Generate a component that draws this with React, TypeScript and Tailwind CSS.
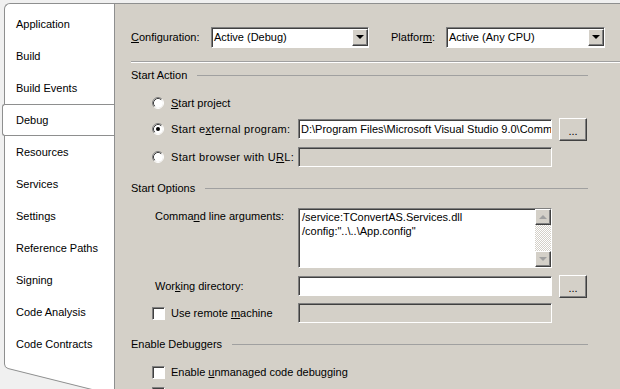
import React from "react";

const sunken =
  "border border-t-[#808080] border-l-[#808080] border-b-white border-r-white shadow-[inset_1px_1px_0_#404040]";
const raised =
  "border border-t-white border-l-white border-b-[#404040] border-r-[#404040] shadow-[inset_-1px_-1px_0_#808080] bg-[#d4d0c8]";

const tabs = [
  "Application",
  "Build",
  "Build Events",
  "Debug",
  "Resources",
  "Services",
  "Settings",
  "Reference Paths",
  "Signing",
  "Code Analysis",
  "Code Contracts",
];

function Combo({ value, className }: { value: string; className: string }) {
  return (
    <div className={`flex h-[21px] items-center bg-white ${sunken} ${className}`}>
      <span className="flex-1 truncate pl-[2px]">{value}</span>
      <div className={`flex h-[17px] w-[16px] items-center justify-center ${raised}`}>
        <div className="h-0 w-0 border-x-[4px] border-t-[4px] border-x-transparent border-t-black" />
      </div>
    </div>
  );
}

function Radio({ checked }: { checked?: boolean }) {
  return (
    <svg width="12" height="12" viewBox="0 0 12 12" className="shrink-0">
      <circle cx="6" cy="6" r="5" fill="white" />
      <path d="M2.11 9.89 A5.5 5.5 0 0 1 9.89 2.11" stroke="#808080" fill="none" />
      <path d="M9.89 2.11 A5.5 5.5 0 0 1 2.11 9.89" stroke="white" fill="none" />
      <path d="M2.82 9.18 A4.5 4.5 0 0 1 9.18 2.82" stroke="#404040" fill="none" />
      {checked && <circle cx="6" cy="6" r="2" fill="black" />}
    </svg>
  );
}

function Check() {
  return <div className={`h-[13px] w-[13px] shrink-0 bg-white ${sunken}`} />;
}

function Dots() {
  return (
    <div className={`ml-[7px] flex h-[23px] w-[28px] shrink-0 items-center justify-center pt-[3px] ${raised}`}>
      ...
    </div>
  );
}

function Header({ title }: { title: string }) {
  return (
    <div className="flex h-[14px] items-center gap-[10px] pr-[32px]">
      <span>{title}</span>
      <div className="h-px flex-1 bg-[#a0a0a0]" />
    </div>
  );
}

export default function App() {
  return (
    <div className="flex h-[389px] w-[620px] overflow-hidden bg-[#f0f0f0] font-['Liberation_Sans',Arial,sans-serif] text-[11px] leading-[14px] text-black">
      {/* Tab strip */}
      <div className="flex w-[114px] shrink-0 flex-col *:shrink-0">
        <div className="ml-[4px] mt-[3px] rounded-tl-[6px] border-l border-t border-[#8e8f8f] bg-white pt-[4px]">
          {tabs.map((t) =>
            t === "Debug" ? (
              <div
                key={t}
                className="-ml-[3px] flex h-[32px] items-center rounded-l-[3px] border-y border-l border-[#8e8f8f] bg-white pl-[13px]"
              >
                {t}
              </div>
            ) : (
              <div key={t} className="flex h-[32px] items-center pl-[11px]">
                {t}
              </div>
            )
          )}
        </div>
        <svg width="114" height="29" viewBox="0 0 114 29">
          <path d="M4 0 L4 4 Q4 7.5 8 8.5 L114 35 L114 0 Z" fill="white" />
          <path d="M4.5 0 L4.5 4 Q4.5 7.5 8 8.5 L114 35" stroke="#8e8f8f" fill="none" />
        </svg>
      </div>

      {/* Property page */}
      <div className="mt-[3px] flex min-w-0 flex-1 flex-col overflow-hidden border-l border-t border-[#8e8f8f] bg-[#d4d0c8] pl-[16px] *:shrink-0">
        <div className="mt-[22px] flex h-[22px] items-center">
          <span className="w-[80px]">
            <u>C</u>onfiguration:
          </span>
          <Combo value="Active (Debug)" className="w-[158px]" />
          <span className="ml-[22px] w-[55px]">
            Platfor<u>m</u>:
          </span>
          <Combo value="Active (Any CPU)" className="w-[159px]" />
        </div>

        <div className="mt-[13px] h-[2px] border-t border-b border-t-[#a0a0a0] border-b-white" />

        <div className="mt-[5px]">
          <Header title="Start Action" />
        </div>

        <div className="mt-[11px] flex h-[20px] items-center pl-[21px]">
          <Radio />
          <span className="ml-[7px]">
            <u>S</u>tart project
          </span>
        </div>
        <div className="mt-[4px] flex h-[24px] items-center">
          <div className="flex w-[167px] items-center pl-[21px]">
            <Radio checked />
            <span className="ml-[7px] tracking-[0.3px]">
              Start e<u>x</u>ternal program:
            </span>
          </div>
          <div className={`h-[20px] w-[254px] overflow-hidden whitespace-nowrap bg-white pl-[2px] pt-[2px] ${sunken}`}>
            <span>{"D:\\Program Files\\Microsoft Visual Studio 9.0\\Commo"}</span>
          </div>
          <Dots />
        </div>
        <div className="mt-[6px] flex h-[20px] items-center">
          <div className="flex w-[167px] items-center pl-[21px]">
            <Radio />
            <span className="ml-[7px] tracking-[0.3px]">
              Start browser with U<u>R</u>L:
            </span>
          </div>
          <div className={`h-[20px] w-[254px] ${sunken}`} />
        </div>

        <div className="mt-[14px]">
          <Header title="Start Options" />
        </div>

        <div className="mt-[13px] flex">
          <div className="w-[167px] pl-[24px] pt-px">
            Comma<u>n</u>d line arguments:
          </div>
          <div className={`flex h-[60px] w-[254px] bg-white ${sunken}`}>
            <div className="flex-1 overflow-hidden whitespace-nowrap pl-[3px] pt-[1px]">
              <div>/service:TConvertAS.Services.dll</div>
              <div>{'/config:"..\\..\\App.config"'}</div>
            </div>
            <div className="flex w-[16px] flex-col">
              <div className={`flex h-[16px] items-center justify-center ${raised}`}>
                <div className="h-0 w-0 border-x-[4px] border-b-[4px] border-x-transparent border-b-[#a0a0a0]" />
              </div>
              <div className="flex-1 bg-[repeating-conic-gradient(#d4d0c8_0_25%,#ffffff_0_50%)] bg-[length:2px_2px]" />
              <div className={`flex h-[16px] items-center justify-center ${raised}`}>
                <div className="h-0 w-0 border-x-[4px] border-t-[4px] border-x-transparent border-t-[#a0a0a0]" />
              </div>
            </div>
          </div>
        </div>

        <div className="mt-[6px] flex h-[24px] items-center">
          <div className="w-[167px] pl-[24px]">
            Wor<u>k</u>ing directory:
          </div>
          <div className={`h-[20px] w-[254px] bg-white ${sunken}`} />
          <Dots />
        </div>
        <div className="mt-[5px] flex h-[20px] items-center">
          <div className="flex w-[167px] items-center pl-[21px]">
            <Check />
            <span className="ml-[6px]">
              Use remote <u>m</u>achine
            </span>
          </div>
          <div className={`h-[20px] w-[254px] ${sunken}`} />
        </div>

        <div className="mt-[14px]">
          <Header title="Enable Debuggers" />
        </div>

        <div className="mt-[11px] flex h-[20px] items-center pl-[21px]">
          <Check />
          <span className="ml-[6px]">
            Enable <u>u</u>nmanaged code debugging
          </span>
        </div>
        {/* next option is cut off by the window edge, only its box shows */}
        <div className="mt-[1px] flex h-[20px] items-center pl-[21px]">
          <Check />
        </div>
      </div>
    </div>
  );
}
